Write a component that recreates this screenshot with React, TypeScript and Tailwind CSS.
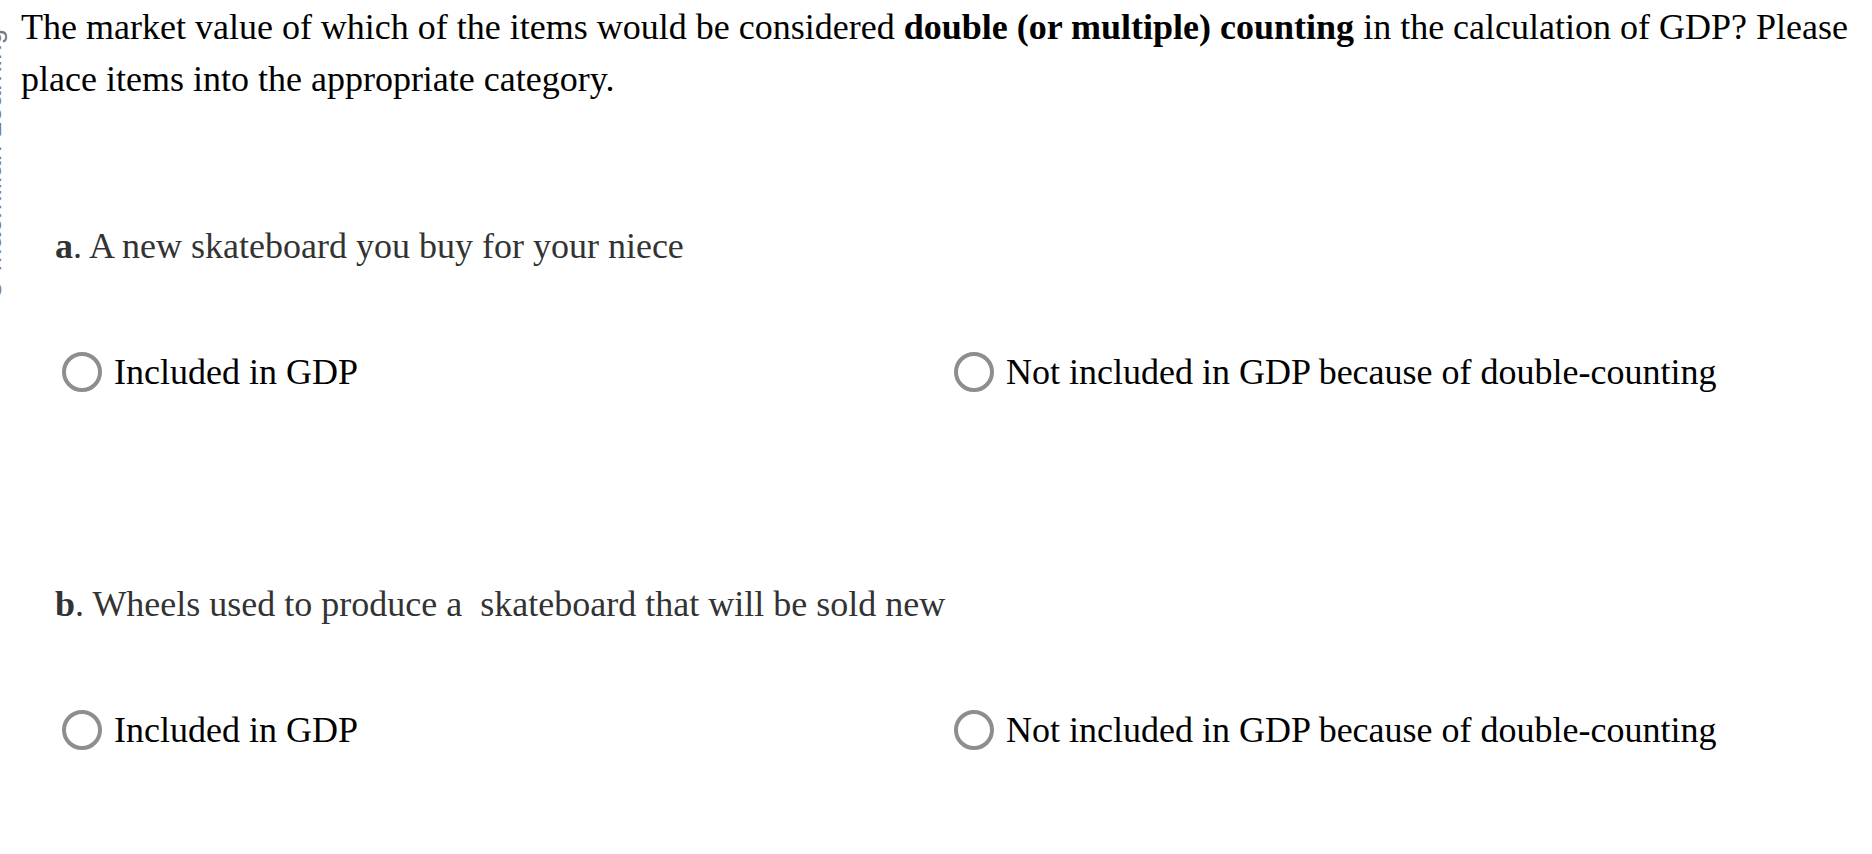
import React from 'react'

function Radio({ label }: { label: string }) {
  return (
    <label className="ml-[7px] flex h-[52px] items-center gap-3 text-black">
      <span className="h-10 w-10 shrink-0 rounded-full border-[4px] border-[#8e8e8e] bg-white" />
      <span>{label}</span>
    </label>
  )
}

function Item({ letter, text }: { letter: string; text: string }) {
  return (
    <div className="ml-[34px]">
      <p className="text-[#333]">
        <b>{letter}</b>. {text}
      </p>
      <div className="mt-[74px] grid grid-cols-2 pr-[33px]">
        <Radio label="Included in GDP" />
        <Radio label="Not included in GDP because of double-counting" />
      </div>
    </div>
  )
}

export default function App() {
  return (
    <div className="relative min-h-[854px] overflow-hidden bg-white font-['Liberation_Serif','Times_New_Roman',serif] text-[36px] leading-[52px]">
      {/* watermark */}
      <div className="absolute left-[-22px] top-[300px] origin-top-left -rotate-90 whitespace-nowrap font-['Liberation_Sans',Arial,sans-serif] text-[28px] leading-none text-[#7a7a7a]">
        © Macmillan Learning
      </div>

      <div className="pl-[21px] pt-[1px]">
        <p className="text-black">
          The market value of which of the items would be considered{' '}
          <b>double (or multiple) counting</b> in the calculation of GDP? Please place items into the
          appropriate category.
        </p>

        <div className="mt-[115px]">
          <Item letter="a" text="A new skateboard you buy for your niece" />
        </div>
        <div className="mt-[180px]">
          <Item letter="b" text={'Wheels used to produce a\u00a0 skateboard that will be sold new'} />
        </div>
      </div>
    </div>
  )
}
